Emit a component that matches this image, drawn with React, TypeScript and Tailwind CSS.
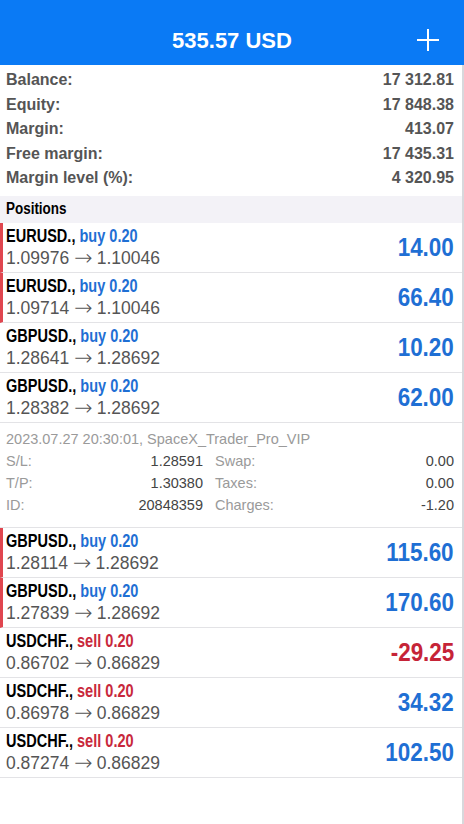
import React from "react";

type Pos = {
  symbol: string;
  side: "buy" | "sell";
  lots: string;
  open: string;
  price: string;
  profit: string;
  flag?: boolean;
};

const positions: Pos[] = [
  { symbol: "EURUSD.", side: "buy", lots: "0.20", open: "1.09976", price: "1.10046", profit: "14.00", flag: true },
  { symbol: "EURUSD.", side: "buy", lots: "0.20", open: "1.09714", price: "1.10046", profit: "66.40", flag: true },
  { symbol: "GBPUSD.", side: "buy", lots: "0.20", open: "1.28641", price: "1.28692", profit: "10.20" },
  { symbol: "GBPUSD.", side: "buy", lots: "0.20", open: "1.28382", price: "1.28692", profit: "62.00" },
];

const positionsAfter: Pos[] = [
  { symbol: "GBPUSD.", side: "buy", lots: "0.20", open: "1.28114", price: "1.28692", profit: "115.60", flag: true },
  { symbol: "GBPUSD.", side: "buy", lots: "0.20", open: "1.27839", price: "1.28692", profit: "170.60", flag: true },
  { symbol: "USDCHF.", side: "sell", lots: "0.20", open: "0.86702", price: "0.86829", profit: "-29.25" },
  { symbol: "USDCHF.", side: "sell", lots: "0.20", open: "0.86978", price: "0.86829", profit: "34.32" },
  { symbol: "USDCHF.", side: "sell", lots: "0.20", open: "0.87274", price: "0.86829", profit: "102.50" },
];

const summary = [
  ["Balance:", "17 312.81"],
  ["Equity:", "17 848.38"],
  ["Margin:", "413.07"],
  ["Free margin:", "17 435.31"],
  ["Margin level (%):", "4 320.95"],
];

const details = [
  ["S/L:", "1.28591", "Swap:", "0.00"],
  ["T/P:", "1.30380", "Taxes:", "0.00"],
  ["ID:", "20848359", "Charges:", "-1.20"],
];

// no condensed face is installed, so the condensed bold of the app is squeezed with scale-x
const PositionRow = ({ p }: { p: Pos }) => {
  const negative = p.profit.startsWith("-");
  return (
    <div
      className={
        "flex h-[50px] items-center justify-between border-b border-[#e3e3e6] pr-[8px] " +
        (p.flag ? "border-l-[3px] border-l-[#e0464f] pl-[3px]" : "pl-[6px]")
      }
    >
      <div className="flex flex-col pt-[1px]">
        <div className="inline-block origin-left scale-x-[0.83] whitespace-nowrap text-[17.5px] font-bold leading-[21px]">
          <span className="text-black">{p.symbol},</span>{" "}
          <span className={p.side === "buy" ? "text-[#1f6fd4]" : "text-[#c8283b]"}>
            {p.side} {p.lots}
          </span>
        </div>
        <div className="flex items-center whitespace-nowrap text-[17.5px] leading-[21px] text-[#555555]">
          <span>{p.open}</span>
          <span className="ml-[5px] mr-[4px] font-['DejaVu_Sans',sans-serif] text-[22px] font-light leading-none text-[#555555]">
            →
          </span>
          <span>{p.price}</span>
        </div>
      </div>
      <div
        className={
          "origin-right scale-x-[0.88] text-[25.5px] font-bold " +
          (negative ? "text-[#c62437]" : "text-[#1f6fd4]")
        }
      >
        {p.profit}
      </div>
    </div>
  );
};

const App: React.FC = () => {
  return (
    <div className="min-h-[824px] w-[464px] bg-white font-['Liberation_Sans',Arial,sans-serif]">
      <header className="relative flex h-[65px] items-center justify-center bg-[#0a7af5] pt-[16px]">
        <h1 className="text-[22px] font-bold text-white">535.57 USD</h1>
        <svg
          className="absolute right-[25px] top-[29px]"
          width="22"
          height="22"
          viewBox="0 0 22 22"
          fill="none"
          stroke="white"
          strokeWidth="2"
        >
          <path d="M11 0v22M0 11h22" />
        </svg>
      </header>

      <div className="border-r-2 border-[#d8d8dc]">
        <div className="pb-[5px] pl-[6px] pr-[8px] pt-[3px]">
          {summary.map(([label, value]) => (
            <div
              key={label}
              className="flex h-[24.5px] items-center justify-between text-[16px] font-bold text-[#555555]"
            >
              <span>{label}</span>
              <span>{value}</span>
            </div>
          ))}
        </div>

        <div className="flex h-[27px] items-center bg-[#f3f2f7] pl-[6px]">
          <span className="inline-block origin-left scale-x-[0.84] text-[16px] font-bold text-black">Positions</span>
        </div>

        {positions.map((p, i) => (
          <PositionRow key={"a" + i} p={p} />
        ))}

        <div className="border-b border-[#e3e3e6] pb-[10px] pl-[6px] pr-[8px] pt-[4px] text-[14.5px]">
          <div className="h-[24px] leading-[24px] text-[#9a9a9a]">2023.07.27 20:30:01, SpaceX_Trader_Pro_VIP</div>
          <div className="grid grid-cols-[197px_1fr] gap-x-[12px]">
            {details.map(([l1, v1, l2, v2]) => (
              <React.Fragment key={l1}>
                <div className="flex h-[22px] items-center justify-between">
                  <span className="text-[#9a9a9a]">{l1}</span>
                  <span className="text-[#444444]">{v1}</span>
                </div>
                <div className="flex h-[22px] items-center justify-between">
                  <span className="text-[#9a9a9a]">{l2}</span>
                  <span className="text-[#444444]">{v2}</span>
                </div>
              </React.Fragment>
            ))}
          </div>
        </div>

        {positionsAfter.map((p, i) => (
          <PositionRow key={"b" + i} p={p} />
        ))}
        <div className="h-[46px]" />
      </div>
    </div>
  );
};

export default App;
